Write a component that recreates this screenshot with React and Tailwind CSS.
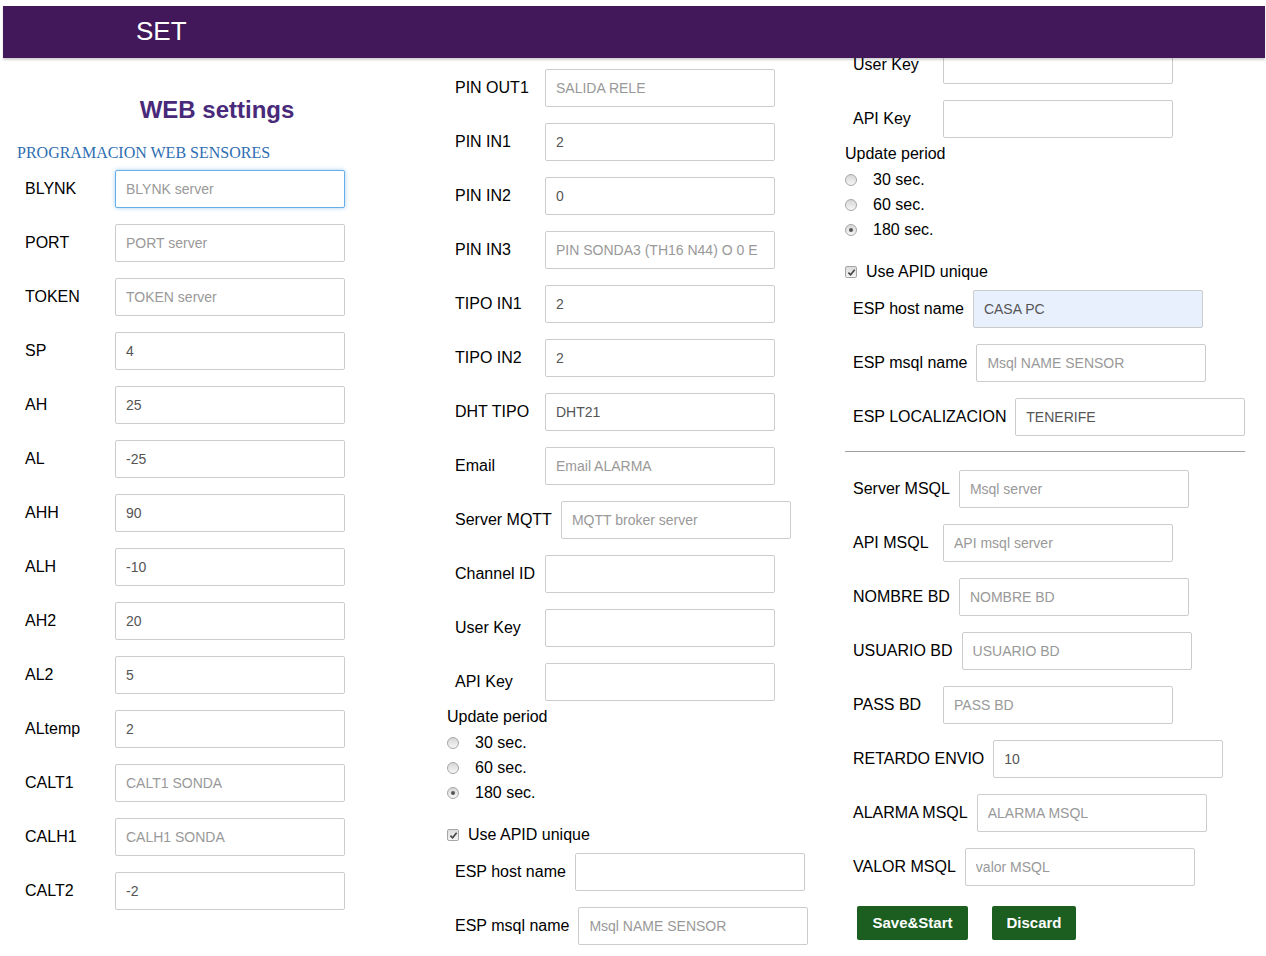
import React from 'react';

const sans = { fontFamily: '"Liberation Sans", Arial, sans-serif' };

function Field({ label, placeholder, value, focus = false, autofill = false }) {
  const base =
    'w-[230px] h-[38px] px-[10px] text-[14px] text-[#555] placeholder:text-[#999] rounded-[2px] outline-none';
  const look = focus
    ? 'border border-[#66afe9] shadow-[0_0_4px_rgba(102,175,233,0.6)] bg-white'
    : autofill
    ? 'border border-[#ccc] bg-[#e8f0fe]'
    : 'border border-[#ccc] bg-white';
  return (
    <div className="flex items-center h-[38px] pl-[8px] shrink-0">
      <label className="min-w-[81px] mr-[9px] text-[16px] text-black whitespace-nowrap">{label}</label>
      <input className={`${base} ${look}`} placeholder={placeholder} defaultValue={value} style={sans} />
    </div>
  );
}

function Radio({ label, checked }) {
  return (
    <div className="flex items-center h-[25px] text-[16px] text-black">
      <span className="w-[12px] h-[12px] rounded-full border border-[#a6a6a6] bg-gradient-to-b from-[#d6d6d6] to-[#f7f7f7] flex items-center justify-center">
        {checked && <span className="w-[4px] h-[4px] rounded-full bg-[#555]" />}
      </span>
      <span className="ml-[16px]">{label}</span>
    </div>
  );
}

function Check({ label }) {
  return (
    <div className="flex items-center h-[20px] text-[16px] text-black">
      <span className="w-[12px] h-[12px] rounded-[2px] border border-[#a6a6a6] bg-gradient-to-b from-[#dcdcdc] to-[#f5f5f5] flex items-center justify-center">
        <svg width="9" height="9" viewBox="0 0 10 10">
          <path d="M1.5 5.2 L4 7.6 L8.5 2" fill="none" stroke="#444" strokeWidth="1.8" />
        </svg>
      </span>
      <span className="ml-[9px]">{label}</span>
    </div>
  );
}

function Period() {
  return (
    <>
      <div className="mt-[5px] leading-[22px] text-[16px] text-black">Update period</div>
      <div className="mt-[2px]">
        <Radio label="30 sec." />
        <Radio label="60 sec." />
        <Radio label="180 sec." checked />
      </div>
      <div className="mt-[20px]">
        <Check label="Use APID unique" />
      </div>
    </>
  );
}

export default function App() {
  return (
    <div className="relative w-full h-[956px] overflow-hidden bg-white" style={sans}>
      <div className="flex">
        {/* left column */}
        <div className="ml-[17px] w-[400px] pt-[96px] flex flex-col">
          <h2 className="text-center text-[24px] font-bold leading-[28px] text-[#48297a]">WEB settings</h2>
          <div
            className="mt-[19px] leading-[20px] text-[16px] text-[#2e6db2]"
            style={{ fontFamily: '"Liberation Serif", "Times New Roman", serif' }}
          >
            PROGRAMACION WEB SENSORES
          </div>
          <div className="mt-[7px] flex flex-col gap-[16px]">
            <Field label="BLYNK" placeholder="BLYNK server" focus />
            <Field label="PORT" placeholder="PORT server" />
            <Field label="TOKEN" placeholder="TOKEN server" />
            <Field label="SP" value="4" />
            <Field label="AH" value="25" />
            <Field label="AL" value="-25" />
            <Field label="AHH" value="90" />
            <Field label="ALH" value="-10" />
            <Field label="AH2" value="20" />
            <Field label="AL2" value="5" />
            <Field label="ALtemp" value="2" />
            <Field label="CALT1" placeholder="CALT1 SONDA" />
            <Field label="CALH1" placeholder="CALH1 SONDA" />
            <Field label="CALT2" value="-2" />
          </div>
        </div>

        {/* middle column */}
        <div className="ml-[30px] w-[398px] pt-[69px] flex flex-col">
          <div className="flex flex-col gap-[16px]">
            <Field label="PIN OUT1" placeholder="SALIDA RELE" />
            <Field label="PIN IN1" value="2" />
            <Field label="PIN IN2" value="0" />
            <Field label="PIN IN3" placeholder="PIN SONDA3 (TH16 N44) O 0 E" />
            <Field label="TIPO IN1" value="2" />
            <Field label="TIPO IN2" value="2" />
            <Field label="DHT TIPO" value="DHT21" />
            <Field label="Email" placeholder="Email ALARMA" />
            <Field label="Server MQTT" placeholder="MQTT broker server" />
            <Field label="Channel ID" />
            <Field label="User Key" />
            <Field label="API Key" />
          </div>
          <Period />
          <div className="mt-[8px] flex flex-col gap-[16px]">
            <Field label="ESP host name" />
            <Field label="ESP msql name" placeholder="Msql NAME SENSOR" />
          </div>
        </div>

        {/* right column */}
        <div className="w-[400px] pt-[46px] flex flex-col">
          <div className="flex flex-col gap-[16px]">
            <Field label="User Key" />
            <Field label="API Key" />
          </div>
          <Period />
          <div className="mt-[8px] flex flex-col gap-[16px]">
            <Field label="ESP host name" value="CASA PC" autofill />
            <Field label="ESP msql name" placeholder="Msql NAME SENSOR" />
            <Field label="ESP LOCALIZACION" value="TENERIFE" />
          </div>
          <hr className="mt-[15px] border-0 border-t border-[#a0a0a0]" />
          <div className="mt-[18px] flex flex-col gap-[16px]">
            <Field label="Server MSQL" placeholder="Msql server" />
            <Field label="API MSQL" placeholder="API msql server" />
            <Field label="NOMBRE BD" placeholder="NOMBRE BD" />
            <Field label="USUARIO BD" placeholder="USUARIO BD" />
            <Field label="PASS BD" placeholder="PASS BD" />
            <Field label="RETARDO ENVIO" value="10" />
            <Field label="ALARMA MSQL" placeholder="ALARMA MSQL" />
            <Field label="VALOR MSQL" placeholder="valor MSQL" />
          </div>
          <div className="mt-[20px] ml-[12px] flex gap-[24px]">
            <button className="w-[111px] h-[34px] rounded-[2px] bg-[#1b5e20] text-white text-[15px] font-bold">
              Save&amp;Start
            </button>
            <button className="w-[84px] h-[34px] rounded-[2px] bg-[#1b5e20] text-white text-[15px] font-bold">
              Discard
            </button>
          </div>
        </div>
      </div>

      {/* fixed top bar */}
      <div className="absolute top-[6px] left-[3px] right-[1px] h-[52px] bg-[#42185a] shadow-[0_2px_2px_rgba(0,0,0,0.18)] flex items-center pl-[133px] pb-[2px]">
        <span className="text-white text-[26px] leading-none">SET</span>
      </div>
    </div>
  );
}
